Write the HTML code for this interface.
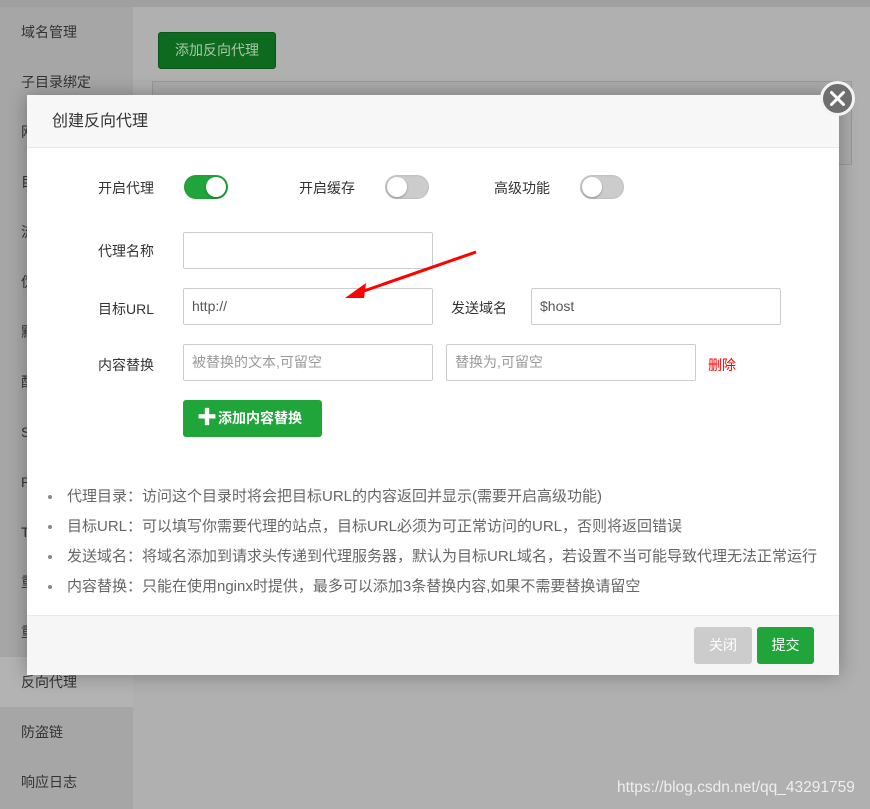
<!DOCTYPE html><html><head><meta charset="utf-8"><style>
*{box-sizing:border-box;margin:0;padding:0}
body{width:870px;height:809px;overflow:hidden;background:#b0b0b0;font-family:"Liberation Sans","Noto Sans CJK SC",sans-serif;position:relative;font-size:14px;color:#333}
.top{position:absolute;left:0;top:0;width:870px;height:7px;background:#a0a0a0}
.side{position:absolute;left:0;top:7px;width:133px;height:802px;background:#a6a6a6}
.side div{height:50px;line-height:50px;padding-left:21px;color:#333;font-size:14px}
.side .act{background:#b3b3b3}
.addbtn{position:absolute;left:158px;top:32px;width:118px;height:37px;background:#0d6a1f;border:1px solid #0a5618;border-radius:3px;color:#a8c8a8;font-size:14px;line-height:35px;text-align:center}
.tbl{position:absolute;left:152px;top:81px;width:700px;height:84px;border:1px solid #999;background:#ababab}
.modal{position:absolute;left:27px;top:95px;width:812px;height:580px;background:#fff;box-shadow:0 0 18px rgba(0,0,0,.3)}
.hd{height:53px;background:#f7f7f7;border-bottom:1px solid #e9e9e9;padding-left:25px;line-height:53px;font-size:16px;color:#333}
.ft{position:absolute;left:0;bottom:0;width:812px;height:60px;background:#f5f6f5;border-top:1px solid #e9e9e9}
.close{position:absolute;left:820px;top:81px;width:35px;height:35px;border-radius:50%;background:#6e6e6e;border:3px solid #f3f3f3}
.lbl{position:absolute;font-size:14px;color:#333}
.sw{position:absolute;width:44px;height:24px;border-radius:12px;background:#ccc;box-shadow:inset 0 0 2px rgba(0,0,0,.15)}
.sw i{position:absolute;top:2px;left:2px;width:20px;height:20px;border-radius:50%;background:#fff;box-shadow:0 1px 2px rgba(0,0,0,.3)}
.sw.on{background:#20a53a}.sw.on i{left:22px}
.inp{position:absolute;height:37px;border:1px solid #ccc;border-radius:2px;background:#fff;padding-left:8px;line-height:35px;font-size:14px;color:#555}
.ph{color:#999}
ul{position:absolute;left:21px;top:387px;list-style:none;font-size:15px;color:#666;white-space:nowrap}
ul li{height:30px;line-height:30px;position:relative;padding-left:19px}
ul li:before{content:"";position:absolute;left:0;top:13px;width:4px;height:4px;border-radius:50%;background:#888}
.b{position:absolute;top:532px;height:37px;line-height:37px;color:#fff;border-radius:3px;text-align:center;font-size:14px}
</style></head><body>
<div class="top"></div>
<div class="side">
<div>域名管理</div><div>子目录绑定</div><div>网站目录</div><div>目录保护</div><div>流量限制</div><div>伪静态</div><div>默认文档</div><div>配置文件</div><div>SSL</div><div>PHP版本</div><div>Tomcat</div><div>重定向</div><div>重定向(测试版)</div><div class="act">反向代理</div><div>防盗链</div><div>响应日志</div>
</div>
<div class="addbtn">添加反向代理</div>
<div class="tbl"></div>
<div class="modal">
<div class="hd">创建反向代理</div>
<div class="lbl" style="left:71px;top:83px">开启代理</div>
<div class="sw on" style="left:157px;top:80px"><i></i></div>
<div class="lbl" style="left:272px;top:83px">开启缓存</div>
<div class="sw" style="left:358px;top:80px"><i></i></div>
<div class="lbl" style="left:467px;top:83px">高级功能</div>
<div class="sw" style="left:553px;top:80px"><i></i></div>
<div class="lbl" style="left:71px;top:146px">代理名称</div>
<div class="inp" style="left:156px;top:137px;width:250px"></div>
<div class="lbl" style="left:71px;top:204px">目标URL</div>
<div class="inp" style="left:156px;top:193px;width:250px">http://</div>
<div class="lbl" style="left:424px;top:203px">发送域名</div>
<div class="inp" style="left:504px;top:193px;width:250px">$host</div>
<div class="lbl" style="left:71px;top:260px">内容替换</div>
<div class="inp ph" style="left:156px;top:249px;width:250px">被替换的文本,可留空</div>
<div class="inp ph" style="left:419px;top:249px;width:250px">替换为,可留空</div>
<div class="lbl" style="left:681px;top:260px;color:#f00">删除</div>
<div style="position:absolute;left:156px;top:305px;width:139px;height:37px;background:#20a53a;border-radius:3px;color:#fff;font-size:14px;line-height:37px;padding-left:35px;font-weight:bold"><span style="position:absolute;left:14px;top:0;font-size:20px">✚</span>添加内容替换</div>
<ul>
<li>代理目录：访问这个目录时将会把目标URL的内容返回并显示(需要开启高级功能)</li>
<li>目标URL：可以填写你需要代理的站点，目标URL必须为可正常访问的URL，否则将返回错误</li>
<li>发送域名：将域名添加到请求头传递到代理服务器，默认为目标URL域名，若设置不当可能导致代理无法正常运行</li>
<li>内容替换：只能在使用nginx时提供，最多可以添加3条替换内容,如果不需要替换请留空</li>
</ul>
<div class="ft"></div>
<div class="b" style="left:667px;width:58px;background:#ccc">关闭</div>
<div class="b" style="left:730px;width:57px;background:#20a53a">提交</div>
</div>
<div class="close"><svg width="29" height="29" viewBox="0 0 29 29"><path d="M8.5 8.5L20.5 20.5M20.5 8.5L8.5 20.5" stroke="#fff" stroke-width="3" stroke-linecap="round"/></svg></div>
<svg style="position:absolute;left:0;top:0" width="870" height="809"><path d="M476 252 L358 293" stroke="#f00" stroke-width="3"/><path d="M345 298 L366 283 L364 298 Z" fill="#f00"/></svg>
<div style="position:absolute;left:617px;top:779px;font-size:15.5px;color:#eee">https://blog.csdn.net/qq_43291759</div>
</body></html>
